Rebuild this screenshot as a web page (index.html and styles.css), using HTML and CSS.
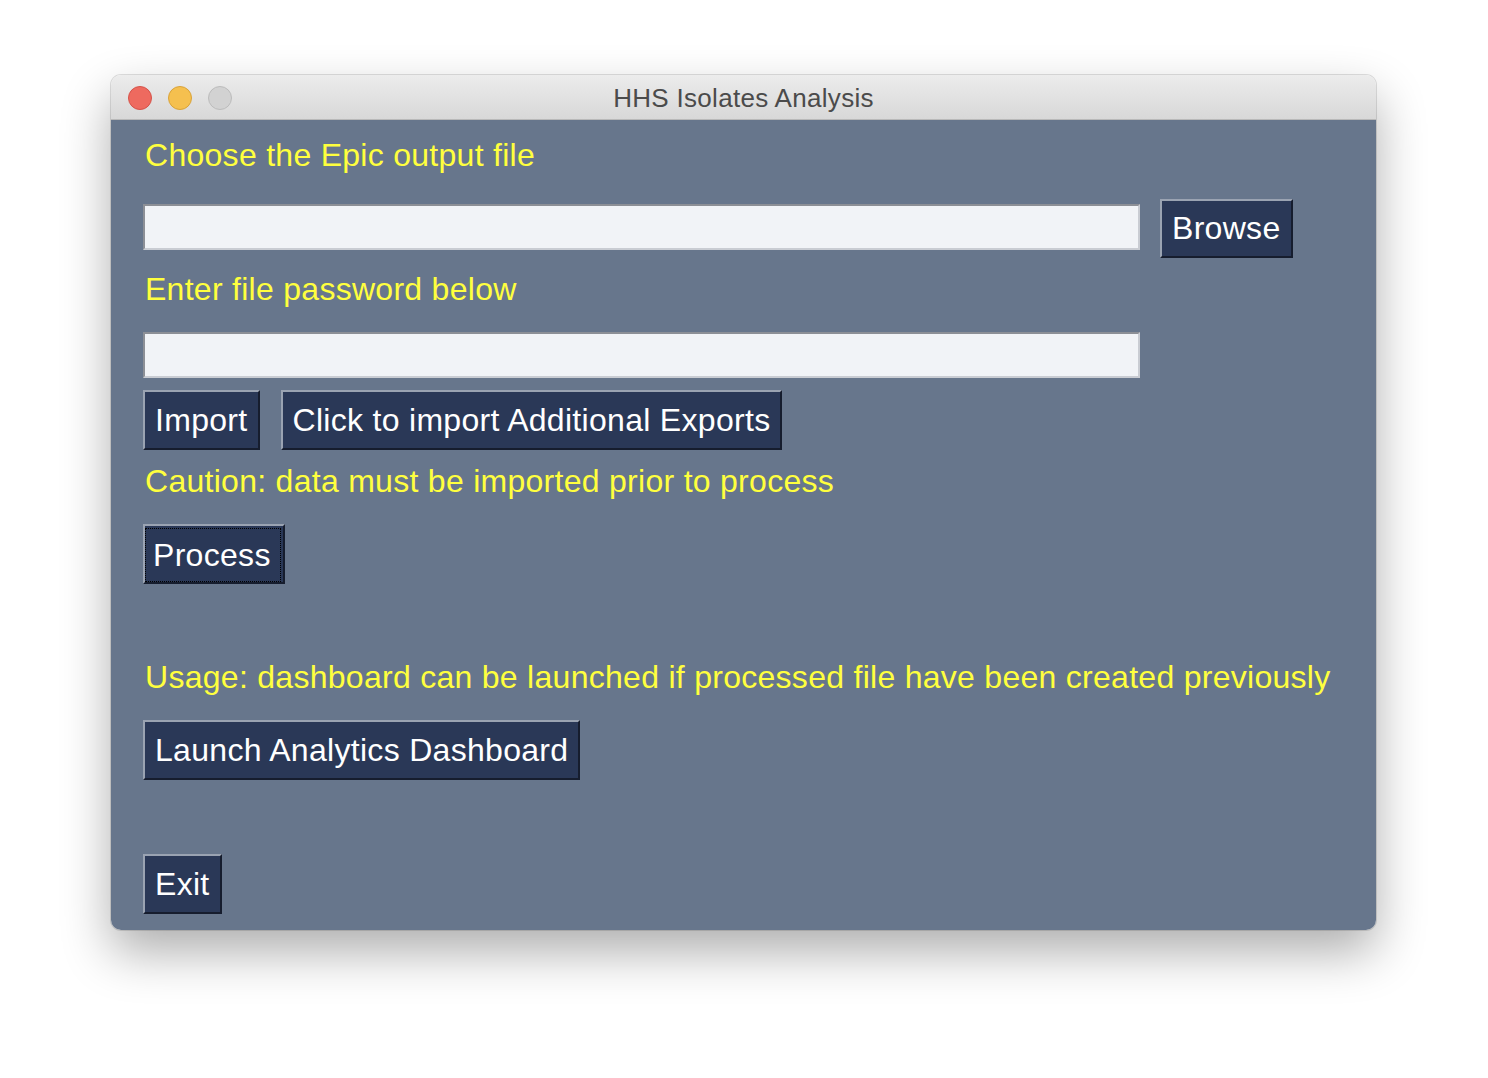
FILE: index.html
```html
<!DOCTYPE html>
<html>
<head>
<meta charset="utf-8">
<title>HHS Isolates Analysis</title>
<link rel="stylesheet" href="styles.css">
</head>
<body>
<div class="window">
  <div class="titlebar">
    <div class="lights">
      <span class="light red"></span>
      <span class="light yellow"></span>
      <span class="light gray"></span>
    </div>
    <div class="title">HHS Isolates Analysis</div>
  </div>
  <div class="content">
    <div class="label l1">Choose the Epic output file</div>
    <div class="row file-row">
      <div class="entry"></div>
      <div class="btn browse">Browse</div>
    </div>
    <div class="label l2">Enter file password below</div>
    <div class="entry pw"></div>
    <div class="row btn-row">
      <div class="btn">Import</div>
      <div class="btn">Click to import Additional Exports</div>
    </div>
    <div class="label l3">Caution: data must be imported prior to process</div>
    <div class="row proc-row">
      <div class="btn focus"><span class="focus-ring">Process</span></div>
    </div>
    <div class="label l4">Usage: dashboard can be launched if processed file have been created previously</div>
    <div class="row launch-row">
      <div class="btn">Launch Analytics Dashboard</div>
    </div>
    <div class="row exit-row">
      <div class="btn">Exit</div>
    </div>
  </div>
</div>
</body>
</html>
```

FILE: styles.css
```css
html, body {
  margin: 0;
  padding: 0;
  background: #ffffff;
}
body {
  width: 1488px;
  height: 1078px;
  overflow: hidden;
  font-family: "Liberation Sans", Arial, sans-serif;
}
.window {
  margin: 75px 0 0 111px;
  width: 1265px;
  height: 855px;
  border-radius: 10px;
  overflow: hidden;
  box-shadow: 0 22px 50px rgba(0,0,0,0.32), 0 0 0 1px rgba(0,0,0,0.12);
  display: flex;
  flex-direction: column;
}
.titlebar {
  height: 44px;
  flex: none;
  background: linear-gradient(#ececec, #d8d8d8);
  border-bottom: 1px solid #b9b9b9;
  position: relative;
  display: flex;
  align-items: center;
  justify-content: center;
}
.lights {
  position: absolute;
  left: 17px;
  top: 11px;
  display: flex;
  gap: 16px;
}
.light {
  width: 24px;
  height: 24px;
  border-radius: 50%;
  box-sizing: border-box;
  display: block;
}
.red { background: #ee6a5f; border: 1px solid #d5534a; }
.yellow { background: #f5c04f; border: 1px solid #d9a33a; }
.gray { background: #d2d2d2; border: 1px solid #bcbcbc; }
.title {
  font-size: 26px;
  letter-spacing: 0.3px;
  color: #4b4b4b;
  margin-left: 0;
  padding-top: 2px;
}
.content {
  flex: 1;
  background: #67768c;
  padding: 15px 0 0 32px;
  display: flex;
  flex-direction: column;
  align-items: flex-start;
}
.label {
  color: #ffff3e;
  font-size: 32px;
  line-height: 40px;
  letter-spacing: 0.28px;
  padding-left: 2px;
  white-space: nowrap;
}
.row {
  display: flex;
  align-items: flex-start;
}
.file-row { margin-top: 24px; gap: 20px; }
.entry {
  width: 997px;
  height: 46px;
  box-sizing: border-box;
  background: #f1f3f7;
  border-top: 2px solid #8c8f96;
  border-left: 2px solid #8c8f96;
  border-right: 2px solid #c9ccd3;
  border-bottom: 2px solid #c9ccd3;
}
.file-row .entry { margin-top: 5px; }
.l2 { margin-top: 11px; }
.pw { margin-top: 23px; }
.btn-row { margin-top: 12px; gap: 21px; }
.btn {
  height: 60px;
  box-sizing: border-box;
  background: #2a3857;
  color: #ffffff;
  font-size: 32px;
  line-height: 56px;
  letter-spacing: 0.3px;
  padding: 0 10px;
  border-top: 2px solid #9aa3b2;
  border-left: 2px solid #9aa3b2;
  border-right: 2px solid #161d2e;
  border-bottom: 2px solid #161d2e;
  white-space: nowrap;
}
.browse { height: 59px; line-height: 55px; }
.l3 { margin-top: 11px; }
.proc-row { margin-top: 23px; }
.btn.focus { padding: 0; }
.focus-ring {
  display: block;
  height: 52px;
  line-height: 52px;
  margin: 2px 2px 2px 0;
  padding: 0 9px 0 7px;
  border: 1px dotted #000000;
  outline: 1px dotted #000;
  outline-offset: -1px;
}
.l4 { margin-top: 73px; }
.launch-row { margin-top: 23px; }
.exit-row { margin-top: 74px; }
```
